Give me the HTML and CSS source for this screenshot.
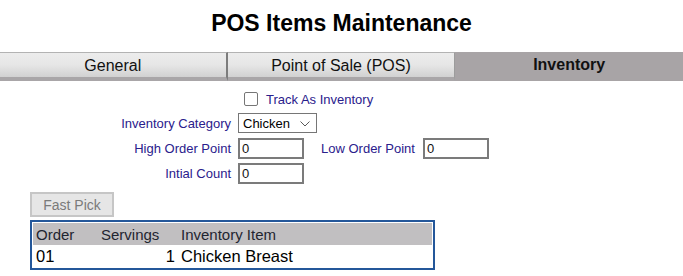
FILE: index.html
```html
<!DOCTYPE html>
<html>
<head>
<meta charset="utf-8">
<link rel="stylesheet" href="styles.css">
</head>
<body>
<h1 class="title">POS Items Maintenance</h1>
<div class="tabs">
  <div class="tab tab-first">General</div>
  <div class="tab tab-mid">Point of Sale (POS)</div>
  <div class="tab tab-active">Inventory</div>
</div>
<div class="form">
  <div class="row row-check">
    <span class="check"></span>
    <span class="lbl">Track As Inventory</span>
  </div>
  <div class="row row-select">
    <label class="lbl lbl-main">Inventory Category</label>
    <div class="select">
      <span class="select-text">Chicken</span>
      <svg class="chev" width="10" height="6" viewBox="0 0 10 6"><polyline points="0.5,0.5 5,5 9.5,0.5" fill="none" stroke="#5a5a5a" stroke-width="1"/></svg>
    </div>
  </div>
  <div class="row row-input">
    <label class="lbl lbl-main">High Order Point</label>
    <input class="field" type="text" value="0">
    <label class="lbl lbl-low">Low Order Point</label>
    <input class="field" type="text" value="0">
  </div>
  <div class="row row-input row-last">
    <label class="lbl lbl-main">Intial Count</label>
    <input class="field" type="text" value="0">
  </div>
</div>
<div class="list-section">
  <button class="btn">Fast Pick</button>
  <div class="grid-box">
    <table class="grid">
      <colgroup><col class="c-order"><col class="c-serv"><col></colgroup>
      <thead>
        <tr><th>Order</th><th>Servings</th><th>Inventory Item</th></tr>
      </thead>
      <tbody>
        <tr><td>01</td><td class="num">1</td><td>Chicken Breast</td></tr>
      </tbody>
    </table>
  </div>
</div>
</body>
</html>
```
FILE: styles.css
```css
html, body {
  margin: 0;
  padding: 0;
  background: #ffffff;
}
body {
  font-family: "Liberation Sans", Arial, sans-serif;
  color: #000;
  width: 683px;
}
.title {
  margin: 0;
  height: 52px;
  box-sizing: border-box;
  padding-top: 10px;
  font-size: 23px;
  line-height: 26px;
  font-weight: bold;
  text-align: center;
  color: #000;
}
.tabs {
  display: flex;
  height: 29px;
}
.tab {
  flex: 0 0 33.3333%;
  box-sizing: border-box;
  border-top: 1px solid #b3b3b3;
  border-bottom: 4px solid #a9a6a8;
  background: linear-gradient(to bottom, #ececec 0%, #e6e6e6 50%, #d1d1d1 100%);
  text-align: center;
  font-size: 16px;
  line-height: 22px;
  padding-top: 2px;
  color: #111;
}
.tab-first {
  border-right: 2px solid #7c7c7c;
}
.tab-mid {
  border-right: 1px solid #9c9c9c;
}
.tab-active {
  background: #a8a4a6;
  border-top-color: #a8a4a6;
  border-bottom-color: #a8a4a6;
  font-weight: bold;
  line-height: 22px;
  padding-top: 1px;
  padding-bottom: 1px;
}
.form {
  padding-top: 8px;
  font-size: 13px;
}
.row {
  display: flex;
  align-items: center;
}
.row-check {
  height: 20px;
  padding-left: 244px;
  margin-bottom: 4px;
}
.row-select {
  height: 20px;
  margin-bottom: 4px;
}
.row-input {
  height: 22px;
  margin-bottom: 3px;
}
.row-last {
  margin-bottom: 0;
}
.lbl {
  color: #2a208c;
  white-space: nowrap;
}
.lbl-main {
  width: 231px;
  text-align: right;
  margin-right: 7px;
}
.lbl-low {
  margin-left: 17px;
  margin-right: 8px;
}
.check {
  width: 14px;
  height: 14px;
  box-sizing: border-box;
  border: 1px solid #767676;
  border-radius: 2px;
  background: #fff;
  margin-right: 8px;
}
.select {
  width: 79px;
  height: 20px;
  box-sizing: border-box;
  border: 1px solid #767676;
  display: flex;
  align-items: center;
  justify-content: space-between;
  padding: 0 6px 0 4px;
  background: #fff;
  color: #000;
}
.chev {
  display: block;
  margin-top: 1px;
}
.field {
  width: 66px;
  height: 21px;
  box-sizing: border-box;
  border: 2px solid #7b7b7b;
  padding: 0 2px;
  margin: 0;
  font-family: "Liberation Sans", Arial, sans-serif;
  font-size: 13px;
  color: #111;
  background: #fff;
  outline: none;
}
.list-section {
  padding-left: 30px;
  padding-top: 8px;
}
.btn {
  display: block;
  width: 84px;
  height: 25px;
  box-sizing: border-box;
  border: 2px solid #c6c6c6;
  background: #e6e6e6;
  color: #7a7a7a;
  font-family: "Liberation Sans", Arial, sans-serif;
  font-size: 14px;
  padding: 0;
  margin: 0 0 3px 0;
}
.grid-box {
  width: 405px;
  box-sizing: border-box;
  border: 2px solid #24579a;
  padding: 1px;
}
.grid {
  width: 100%;
  border-collapse: collapse;
}
.c-order { width: 65px; }
.c-serv { width: 80px; }
.grid th {
  background: #c1bfc1;
  height: 22px;
  padding: 0 3px;
  text-align: left;
  font-weight: normal;
  font-size: 15px;
  color: #1f2530;
}
.grid td {
  height: 22px;
  padding: 0 3px;
  font-size: 16.5px;
  color: #000;
}
.grid td.num {
  text-align: right;
  padding-right: 3px;
}
```
